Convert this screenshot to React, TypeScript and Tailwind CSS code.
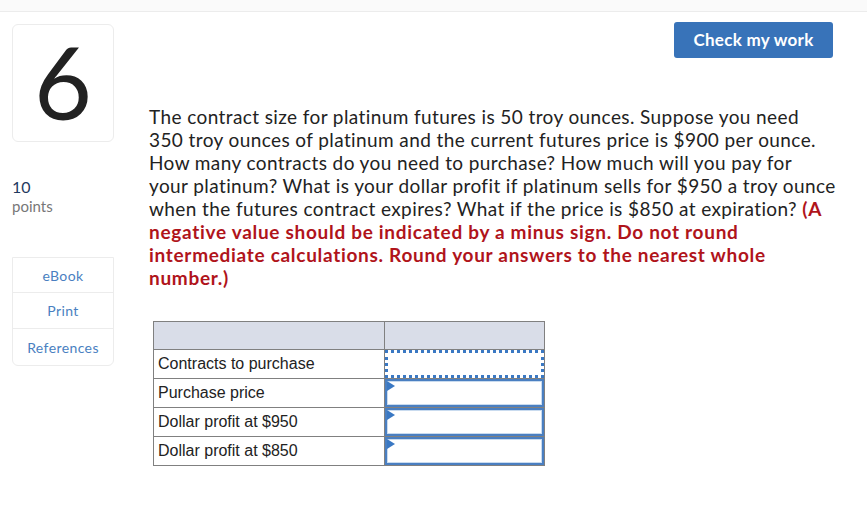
import React from 'react';

const rows = ['Contracts to purchase', 'Purchase price', 'Dollar profit at $950', 'Dollar profit at $850'];

const AnswerCell: React.FC<{ focused?: boolean }> = ({ focused }) => {
  if (focused) {
    return (
      <td className="p-0 border border-[#808080] h-[28px]">
        <div className="h-[28px] border-[3px] border-dotted border-[#3a78c3]"></div>
      </td>
    );
  }
  return (
    <td className="p-0 border border-[#808080] h-[28px]">
      <div className="relative h-[28px] border-2 border-[#4a7fc1] bg-white">
        <div className="absolute inset-0 border border-[#c9dbef]"></div>
        <div className="absolute left-0 top-0 w-0 h-0 border-t-[5px] border-b-[5px] border-l-[8px] border-t-transparent border-b-transparent border-l-[#3a78c3]"></div>
      </div>
    </td>
  );
};

export default function App() {
  return (
    <div className="w-[867px] h-[528px] bg-white overflow-hidden" style={{ fontFamily: 'Lato, "Open Sans", sans-serif' }}>
      <div className="h-[12px] bg-[#fafafa] border-b border-[#ececec]"></div>
      <div className="flex">
        {/* sidebar */}
        <div className="ml-[12px] w-[102px] pt-[12px]">
          <div className="h-[118px] rounded-[6px] border border-[#ececec] flex items-center justify-center">
            <span className="text-[100px] leading-none text-[#222] -mt-[4px]">6</span>
          </div>
          <div className="mt-[35px] text-[16px] leading-[20px] text-[#1f3a60]">10</div>
          <div className="text-[15px] leading-[18px] text-[#777]">points</div>
          <div className="mt-[42px] rounded-b-[6px] border border-[#ececec] text-[14px] tracking-[0.4px] text-[#4a7fc1]">
            <div className="h-[35px] flex items-center justify-center border-b border-[#ececec]">eBook</div>
            <div className="h-[36px] flex items-center justify-center border-b border-[#ececec]">Print</div>
            <div className="h-[36px] flex items-center justify-center">References</div>
          </div>
        </div>

        {/* main */}
        <div className="ml-[35px] w-[684px]">
          <div className="flex justify-end pt-[10px]">
            <button className="w-[159px] h-[36px] rounded-[3px] bg-[#3873b9] text-white font-bold text-[17px] tracking-[0.3px]">
              Check my work
            </button>
          </div>
          <p className="mt-[47px] w-[710px] text-[19px] leading-[23px] tracking-[0.4px] text-[#222]">
            The contract size for platinum futures is 50 troy ounces. Suppose you need
            <br />
            350 troy ounces of platinum and the current futures price is $900 per ounce.
            <br />
            How many contracts do you need to purchase? How much will you pay for
            <br />
            your platinum? What is your dollar profit if platinum sells for $950 a troy ounce
            <br />
            when the futures contract expires? What if the price is $850 at expiration?{' '}
            <span className="font-bold tracking-[0.7px] text-[#b0141b]">
              (A
              <br />
              negative value should be indicated by a minus sign. Do not round
              <br />
              intermediate calculations. Round your answers to the nearest whole
              <br />
              number.)
            </span>
          </p>
          <table
            className="mt-[32px] ml-[4px] border-collapse text-[16px] text-[#222]"
            style={{ fontFamily: '"Liberation Sans", Arial, sans-serif' }}
          >
            <tbody>
              <tr className="bg-[#d9dde8]">
                <td className="w-[231px] h-[28px] border border-[#808080]"></td>
                <td className="w-[160px] h-[28px] border border-[#808080]"></td>
              </tr>
              {rows.map((r, i) => (
                <tr key={r}>
                  <td className="h-[28px] px-[4px] border border-[#808080] leading-none">{r}</td>
                  <AnswerCell focused={i === 0} />
                </tr>
              ))}
            </tbody>
          </table>
        </div>
      </div>
    </div>
  );
}
